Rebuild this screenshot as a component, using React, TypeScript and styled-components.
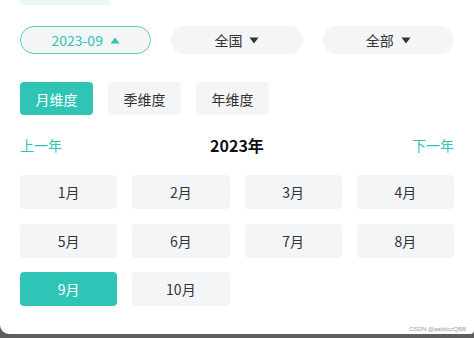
import React from "react";
import styled, { createGlobalStyle } from "styled-components";

const Global = createGlobalStyle`
  html, body { margin: 0; padding: 0; background: #5f5f5f; }
  body { font-family: "Noto Sans CJK SC", "Noto Sans", sans-serif; }
  * { box-sizing: border-box; }
`;

const TEAL = "#2fc4b5";

const Panel = styled.div`
  position: relative;
  width: 474px;
  height: 334px;
  background: #ffffff;
  border-bottom-left-radius: 9px;
  border-bottom-right-radius: 4px;
  padding: 0 20px;
  display: flex;
  flex-direction: column;
`;

const TopStrip = styled.div`
  width: 91px;
  height: 5px;
  background: #eaf8f6;
  border-radius: 0 0 3px 3px;
`;

const FilterRow = styled.div`
  margin-top: 21px;
  display: grid;
  grid-template-columns: repeat(3, 1fr);
  column-gap: 20px;
`;

const Pill = styled.div<{ $active?: boolean }>`
  height: 28px;
  border-radius: 14px;
  background: #f4f5f7;
  border: 1.5px solid ${(p) => (p.$active ? "#5fc9bd" : "transparent")};
  color: ${(p) => (p.$active ? TEAL : "#333")};
  font-size: 14px;
  display: flex;
  align-items: center;
  justify-content: center;
  gap: 7px;
`;

const Caret = styled.svg`
  width: 10px;
  height: 7px;
`;

const TabRow = styled.div`
  margin-top: 28px;
  display: flex;
  gap: 15px;
`;

const Tab = styled.div<{ $active?: boolean }>`
  width: 73px;
  height: 33px;
  border-radius: 4px;
  background: ${(p) => (p.$active ? TEAL : "#f4f5f7")};
  color: ${(p) => (p.$active ? "#fff" : "#333")};
  font-size: 14px;
  display: flex;
  align-items: center;
  justify-content: center;
`;

const YearRow = styled.div`
  margin-top: 15px;
  height: 30px;
  display: flex;
  align-items: center;
  justify-content: space-between;
`;

const YearLink = styled.span`
  color: ${TEAL};
  font-size: 14px;
`;

const YearTitle = styled.span`
  color: #111;
  font-size: 16px;
  font-weight: 700;
`;

const MonthGrid = styled.div`
  margin-top: 15px;
  display: grid;
  grid-template-columns: repeat(4, 1fr);
  column-gap: 15px;
  row-gap: 14.5px;
`;

const Month = styled.div<{ $active?: boolean }>`
  height: 34px;
  border-radius: 4px;
  background: ${(p) => (p.$active ? TEAL : "#f4f5f7")};
  color: ${(p) => (p.$active ? "#fff" : "#333")};
  font-size: 14px;
  display: flex;
  align-items: center;
  justify-content: center;
`;

const Credit = styled.span`
  position: absolute;
  right: 8px;
  bottom: 2px;
  font-family: "Liberation Sans", Arial, sans-serif;
  font-size: 6px;
  color: #9a9a9a;
`;

const Up = () => (
  <Caret viewBox="0 0 10 7">
    <path d="M5 0.5 L9.5 6.5 L0.5 6.5 Z" fill={TEAL} />
  </Caret>
);

const Down = () => (
  <Caret viewBox="0 0 10 7">
    <path d="M0.5 0.5 L9.5 0.5 L5 6.5 Z" fill="#333" />
  </Caret>
);

export default function App() {
  const months = Array.from({ length: 10 }, (_, i) => i + 1);
  return (
    <>
      <Global />
      <Panel>
        <TopStrip />
        <FilterRow>
          <Pill $active>
            2023-09 <Up />
          </Pill>
          <Pill>
            全国 <Down />
          </Pill>
          <Pill>
            全部 <Down />
          </Pill>
        </FilterRow>
        <TabRow>
          <Tab $active>月维度</Tab>
          <Tab>季维度</Tab>
          <Tab>年维度</Tab>
        </TabRow>
        <YearRow>
          <YearLink>上一年</YearLink>
          <YearTitle>2023年</YearTitle>
          <YearLink>下一年</YearLink>
        </YearRow>
        <MonthGrid>
          {months.map((m) => (
            <Month key={m} $active={m === 9}>
              {m}月
            </Month>
          ))}
        </MonthGrid>
        <Credit>CSDN @aabbccQBB</Credit>
      </Panel>
    </>
  );
}
